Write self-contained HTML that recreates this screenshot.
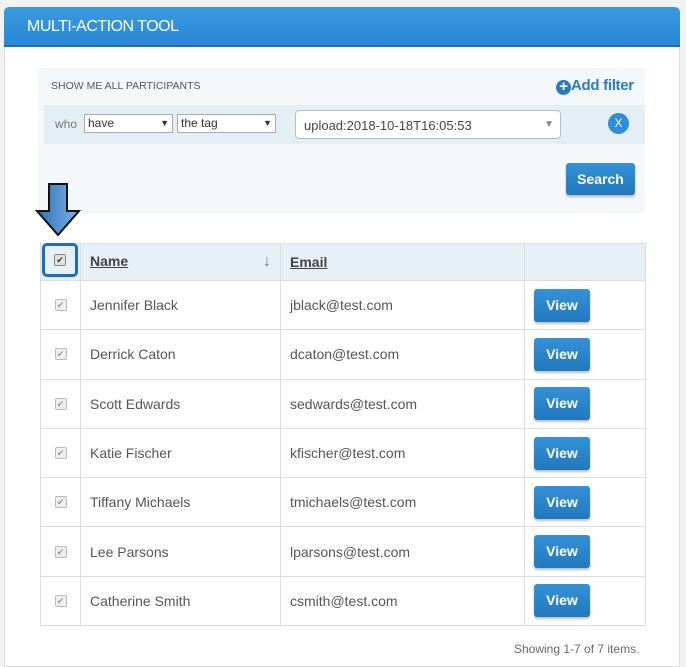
<!DOCTYPE html>
<html><head><style>
*{box-sizing:border-box;margin:0;padding:0}
body{width:686px;height:662px;background:#f2f2f2;font-family:"Liberation Sans",sans-serif;position:relative;overflow:hidden}
.panel{position:absolute;left:4px;top:7px;width:676px;height:660px;background:#fff;border:1px solid #dcdcdc;border-radius:5px 5px 0 0}
.hdr{position:absolute;left:-1px;top:-1px;width:676px;height:40px;background:linear-gradient(#3a9ae0,#2a88d4);border-radius:5px 5px 0 0;border-bottom:2px solid #1d6fae;color:#fff;font-size:16px;padding:11px 0 0 23px;letter-spacing:-0.5px}
.abs{position:absolute}
.filter{left:38px;top:68px;width:607px;height:145px;background:#f4f8fb}
.band{left:44px;top:105px;width:601px;height:39px;background:#e3eef5}
.sel{background:#fff;border:1px solid #aaa;font-size:12px;color:#333;height:19px;padding:1px 3px}
.btn{background:linear-gradient(#3592d8,#2278bd);color:#fff;border-radius:3px;font-weight:bold;box-shadow:0 2px 2px rgba(0,0,0,.25);text-align:center}
table{position:absolute;left:40px;top:243px;width:606px;border-collapse:collapse;font-size:14px;color:#555}
td{border:1px solid #ddd;height:49.3px;padding:0 9px}
tr.h td{background:#e8f0f7;height:37px;font-weight:bold;color:#444;text-decoration:underline}
.cb{width:12px;height:12px;border:1px solid #bbb;border-radius:2px;background:#eee;font-size:9px;color:#999;line-height:10px;text-align:center;margin:0 auto}
.vb{width:56px;height:33px;line-height:33px;font-size:14px}
</style></head><body>
<div class="panel">
<div class="hdr">MULTI-ACTION TOOL</div>
</div>
<div class="abs filter"></div>
<div class="abs" style="left:51px;top:80px;font-size:10.5px;color:#555">SHOW ME ALL PARTICIPANTS</div>
<div class="abs" style="left:556px;top:77px;font-size:15px;font-weight:bold;color:#2a7bc0;letter-spacing:-0.3px"><span style="display:inline-block;width:15px;height:15px;border-radius:50%;background:#2a7bc0;color:#fff;font-size:15px;line-height:14px;text-align:center;vertical-align:-1px">+</span>Add filter</div>
<div class="abs band"></div>
<div class="abs" style="left:55px;top:117px;font-size:12px;color:#777">who</div>
<div class="abs sel" style="left:84px;top:114px;width:89px">have<span style="float:right;font-size:9px;margin-top:2px">▼</span></div>
<div class="abs sel" style="left:177px;top:114px;width:99px">the tag<span style="float:right;font-size:9px;margin-top:2px">▼</span></div>
<div class="abs" style="left:295px;top:110px;width:266px;height:29px;background:#fff;border:1px solid #bbb;border-radius:4px;font-size:13px;color:#444;padding:7px 0 0 8px">upload:2018-10-18T16:05:53<span style="position:absolute;right:6px;top:8px;font-size:10px;color:#888">▼</span></div>
<div class="abs" style="left:608px;top:113px;width:21px;height:21px;border-radius:50%;background:#2f8ed8;color:#fff;font-size:12px;text-align:center;line-height:21px">X</div>
<div class="abs btn" style="left:566px;top:163px;width:69px;height:32px;line-height:32px;font-size:14px">Search</div>
<svg class="abs" style="left:35px;top:183px" width="48" height="56"><defs><linearGradient id="g" x1="0" x2="1"><stop offset="0" stop-color="#2f6fb5"/><stop offset="1" stop-color="#7ab4e8"/></linearGradient></defs><path d="M14 1h18v27h12L23 52 2 28h12z" fill="url(#g)" stroke="#111" stroke-width="2"/></svg>
<table>
<tr class="h"><td style="width:40px;padding:0"></td><td style="width:200px">Name<span style="float:right;text-decoration:none;font-weight:normal;color:#777;font-size:16px">↓</span></td><td style="width:244px">Email</td><td></td></tr>
<tr><td style="padding:0"><div class="cb">✔</div></td><td>Jennifer Black</td><td>jblack@test.com</td><td><div class="btn vb">View</div></td></tr>
<tr><td style="padding:0"><div class="cb">✔</div></td><td>Derrick Caton</td><td>dcaton@test.com</td><td><div class="btn vb">View</div></td></tr>
<tr><td style="padding:0"><div class="cb">✔</div></td><td>Scott Edwards</td><td>sedwards@test.com</td><td><div class="btn vb">View</div></td></tr>
<tr><td style="padding:0"><div class="cb">✔</div></td><td>Katie Fischer</td><td>kfischer@test.com</td><td><div class="btn vb">View</div></td></tr>
<tr><td style="padding:0"><div class="cb">✔</div></td><td>Tiffany Michaels</td><td>tmichaels@test.com</td><td><div class="btn vb">View</div></td></tr>
<tr><td style="padding:0"><div class="cb">✔</div></td><td>Lee Parsons</td><td>lparsons@test.com</td><td><div class="btn vb">View</div></td></tr>
<tr><td style="padding:0"><div class="cb">✔</div></td><td>Catherine Smith</td><td>csmith@test.com</td><td><div class="btn vb">View</div></td></tr>
</table>
<div class="abs" style="left:42px;top:243px;width:36px;height:34px;border:3px solid #1a6fc0;border-radius:5px"></div>
<div class="abs cb" style="left:54px;top:254px;margin:0;color:#333;background:#e0e0e0;border-color:#888">✔</div>
<div class="abs" style="left:514px;top:642px;font-size:12px;color:#666">Showing 1-7 of 7 items.</div>
</body></html>
